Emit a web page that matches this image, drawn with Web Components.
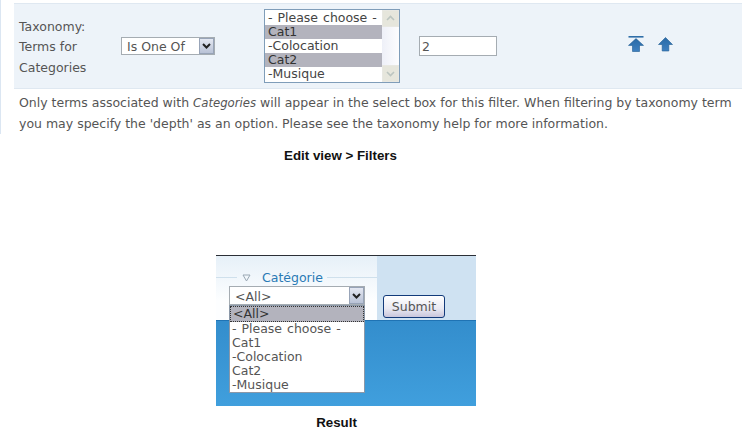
<!DOCTYPE html>
<html>
<head>
<meta charset="utf-8">
<title>Taxonomy filter</title>
<style>
  html, body { margin: 0; background: #fff; }
  body { width: 742px; height: 439px; overflow: hidden; font-family: "DejaVu Sans", sans-serif; }
</style>
</head>
<body>
<filter-panel></filter-panel>
<shot-caption style="--w: 681px; --h: 16px; --mt: 14px">Edit view &gt; Filters</shot-caption>
<result-shot></result-shot>
<shot-caption style="--w: 673px; --h: 16px; --mt: 9px">Result</shot-caption>

<script>
const arrowDown = `<svg width="9" height="8" viewBox="0 0 9 8"><path d="M1 2 L4.5 5.5 L8 2" fill="none" stroke="#222" stroke-width="2"/></svg>`;

class DropSelect extends HTMLElement {
    constructor() {
        super();
        this.attachShadow({mode: 'open'});
        this.shadowRoot.innerHTML = `
            <style>
                :host {
                    display: flex;
                    box-sizing: border-box;
                    background: #fff;
                    border: 1px solid #a5acb2;
                    color: #555;
                    font: 12.5px "DejaVu Sans", sans-serif;
                    height: var(--h, 18px);
                    width: var(--w, 94px);
                    align-items: center;
                }
                .label { flex: 1; padding: var(--padt, 0) 0 0 var(--pad, 5px); white-space: nowrap; }
                .btn {
                    width: 15px;
                    height: 100%;
                    box-sizing: border-box;
                    border: 1px solid #98a4b8;
                    background: linear-gradient(#e4e8f2, #b9c2d6);
                    display: flex;
                    align-items: center;
                    justify-content: center;
                }
            </style>
            <span class="label"><slot></slot></span>
            <span class="btn">${arrowDown}</span>
        `;
    }
}
customElements.define("drop-select", DropSelect);

class ListBox extends HTMLElement {
    constructor() {
        super();
        this.attachShadow({mode: 'open'});
        this.shadowRoot.innerHTML = `
            <style>
                :host {
                    display: flex;
                    box-sizing: border-box;
                    width: 136px;
                    height: 74px;
                    background: #fff;
                    border: 1px solid #7f9db9;
                    color: #444;
                    font: 12.5px/14px "DejaVu Sans", sans-serif;
                }
                .items { flex: 1; padding-top: 1px; white-space: nowrap; overflow: hidden; }
                .items div { height: 14px; padding-left: 3px; }
                .wide { word-spacing: 1px; }
                .sel { background: #b3b3bd; color: #333; }
                .bar {
                    width: 17px;
                    background: linear-gradient(90deg, #eef0f8, #fdfdfe);
                    display: flex;
                    flex-direction: column;
                    justify-content: space-between;
                }
                .cap {
                    height: 17px;
                    box-sizing: border-box;
                    border: 1px solid #e8e8e2;
                    background: #e6e6dc;
                    display: flex;
                    align-items: center;
                    justify-content: center;
                }
            </style>
            <div class="items">
                <div class="wide">- Please choose -</div>
                <div class="sel">Cat1</div>
                <div>-Colocation</div>
                <div class="sel">Cat2</div>
                <div>-Musique</div>
            </div>
            <div class="bar">
                <div class="cap"><svg width="9" height="7" viewBox="0 0 9 7"><path d="M1 5 L4.5 1.5 L8 5" fill="none" stroke="#bcc5c0" stroke-width="1.6"/></svg></div>
                <div class="cap"><svg width="9" height="7" viewBox="0 0 9 7"><path d="M1 2 L4.5 5.5 L8 2" fill="none" stroke="#bcc5c0" stroke-width="1.6"/></svg></div>
            </div>
        `;
    }
}
customElements.define("list-box", ListBox);

class FilterPanel extends HTMLElement {
    constructor() {
        super();
        this.attachShadow({mode: 'open'});
        this.shadowRoot.innerHTML = `
            <style>
                :host {
                    display: block;
                    box-sizing: border-box;
                    height: 134px;
                    padding: 3px 0 0 13px;
                    border-left: 1px solid #dbe6f2;
                    font: 12.5px "DejaVu Sans", sans-serif;
                    color: #555;
                }
                .row {
                    display: grid;
                    grid-template-columns: 102px 143px 155px 209px auto;
                    align-items: center;
                    box-sizing: border-box;
                    width: 728px;
                    height: 86px;
                    padding-left: 5px;
                    background: #edf3f9;
                    border-top: 1px solid #dfe8f1;
                    border-bottom: 1px solid #dfe8f1;
                }
                .name { line-height: 20.5px; color: #555; padding-top: 3px; }
                .num {
                    box-sizing: border-box;
                    width: 78px;
                    height: 20px;
                    border: 1px solid #a5acb2;
                    background: #fff;
                    padding-left: 2px;
                    line-height: 19px;
                    color: #555;
                }
                .ops { display: flex; gap: 14px; align-items: center; margin-top: -4px; }
                .ops svg { display: block; }
                p {
                    margin: 4px 0 0;
                    padding-left: 5px;
                    line-height: 20.5px;
                    white-space: nowrap;
                    color: #555;
                }
                p i { font-size: 11.7px; line-height: 1; }
            </style>
            <div class="row">
                <div class="name">Taxonomy:<br>Terms for<br>Categories</div>
                <drop-select>Is One Of</drop-select>
                <list-box></list-box>
                <div class="num">2</div>
                <div class="ops">
                    <svg width="16" height="16" viewBox="0 0 16 16">
                        <defs><linearGradient id="up" x1="0" y1="0" x2="0" y2="1"><stop offset="0" stop-color="#2a6aa6"/><stop offset="1" stop-color="#3f80c0"/></linearGradient></defs>
                        <rect x="0.5" y="0" width="15" height="1.6" fill="#2f6ea8"/>
                        <path d="M8 2.6 L15.5 9.4 L11.5 9.4 L11.5 15.5 L4.5 15.5 L4.5 9.4 L0.5 9.4 Z" fill="url(#up)" stroke="#1f5a92" stroke-width="0.6"/>
                    </svg>
                    <svg width="15" height="15" viewBox="0 0 15 15">
                        <path d="M7.5 0.5 L14.5 7.5 L10.8 7.5 L10.8 14 L4.2 14 L4.2 7.5 L0.5 7.5 Z" fill="url(#up)" stroke="#1f5a92" stroke-width="0.6"/>
                    </svg>
                </div>
            </div>
            <p>Only terms associated with <i>Categories</i> will appear in the select box for this filter. When filtering by taxonomy term<br>you may specify the 'depth' as an option. Please see the taxonomy help for more information.</p>
        `;
    }
}
customElements.define("filter-panel", FilterPanel);

class ShotCaption extends HTMLElement {
    constructor() {
        super();
        this.attachShadow({mode: 'open'});
        this.shadowRoot.innerHTML = `
            <style>
                :host {
                    display: block;
                    width: var(--w);
                    height: var(--h);
                    margin-top: var(--mt);
                    text-align: center;
                    font: bold 13.33px/16px "Liberation Sans", sans-serif;
                    color: #111;
                }
            </style>
            <slot></slot>
        `;
    }
}
customElements.define("shot-caption", ShotCaption);

class ResultShot extends HTMLElement {
    constructor() {
        super();
        this.attachShadow({mode: 'open'});
        this.shadowRoot.innerHTML = `
            <style>
                :host {
                    display: block;
                    position: relative;
                    box-sizing: border-box;
                    width: 260px;
                    height: 151px;
                    margin: 91px 0 0 216px;
                    border-top: 1px solid #2b2f36;
                    background: linear-gradient(#2a80c0, #409fdd);
                    font: 12.5px "DejaVu Sans", sans-serif;
                    color: #555;
                }
                .head {
                    display: flex;
                    height: 65px;
                    background: #cfe2f2;
                    border-bottom: 1px solid #1f73b4;
                    box-sizing: border-box;
                }
                .form {
                    box-sizing: border-box;
                    width: 161px;
                    height: 64px;
                    padding: 15px 0 0 13px;
                    background: linear-gradient(#e6f0f8, #fdfeff 70%);
                }
                .legend {
                    display: flex;
                    align-items: center;
                    height: 13px;
                    margin-left: -13px;
                    color: #2a7ab5;
                    font-size: 12.5px;
                }
                .legend i { height: 1px; background: #cfe0ec; }
                .legend i.a { width: 21px; }
                .legend i.b { flex: 1; }
                .legend svg { margin: 0 11px 0 5px; }
                .legend span { margin-right: 4px; }
                .pick { margin-top: 2px; }
                drop-select { --w: 136px; --h: 19px; --pad: 5px; --padt: 1px; }
                button {
                    all: unset;
                    box-sizing: border-box;
                    width: 62px;
                    height: 23px;
                    margin: 39px 0 0 6px;
                    border: 1px solid #123a7a;
                    border-radius: 3px;
                    background: linear-gradient(#fff, #e9e9f2 60%, #c9c6dc);
                    text-align: center;
                    font: 12.5px/20px "DejaVu Sans", sans-serif;
                    color: #555;
                }
                /* open dropdown lies over the banner */
                .menu {
                    position: absolute;
                    left: 13px;
                    top: 49px;
                    width: 136px;
                    box-sizing: border-box;
                    background: #fff;
                    border: 1px solid #8b98a8;
                    line-height: 14px;
                    white-space: nowrap;
                }
                .menu div { height: 14px; padding-left: 2px; }
                .menu .wide { word-spacing: 1px; }
                .menu .on { background: #b3b3bd; color: #333; outline: 1px dotted #333; outline-offset: -1px; height: 16px; line-height: 16px; padding-left: 3px; }
            </style>
            <div class="head">
                <div class="form">
                    <div class="legend">
                        <i class="a"></i>
                        <svg width="9" height="8" viewBox="0 0 9 8"><path d="M1 1 L8 1 L4.5 7 Z" fill="none" stroke="#9aa8b4"/></svg>
                        <span>Catégorie</span>
                        <i class="b"></i>
                    </div>
                    <div class="pick"><drop-select>&lt;All&gt;</drop-select></div>
                </div>
                <button>Submit</button>
            </div>
            <div class="menu">
                <div class="on">&lt;All&gt;</div>
                <div class="wide">- Please choose -</div>
                <div>Cat1</div>
                <div>-Colocation</div>
                <div>Cat2</div>
                <div>-Musique</div>
            </div>
        `;
    }
}
customElements.define("result-shot", ResultShot);
</script>
</body>
</html>
